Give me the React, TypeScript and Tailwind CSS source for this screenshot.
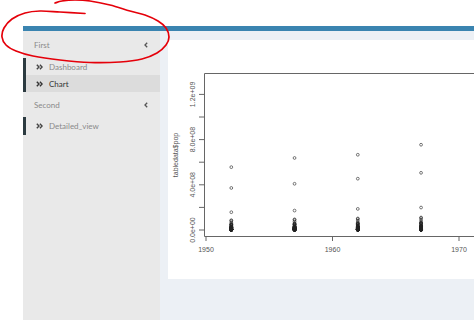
import React from "react";

type P = [number, number];

const redPts: P[] = [
  [85, 13.5], [60, 12], [40, 11], [25, 13], [12, 19], [4, 28], [2, 37], [6, 45], [16, 51],
  [33, 56], [60, 60], [90, 62.5], [120, 62], [142, 59], [157, 53], [166, 45], [169, 37],
  [166, 28], [158, 21], [145, 15], [130, 11], [110, 5], [90, 1], [75, 0], [62, 1], [55, 3],
];

function smooth(points: P[]): string {
  let d = `M${points[0][0]} ${points[0][1]}`;
  for (let i = 0; i < points.length - 1; i++) {
    const p0 = points[i - 1] || points[i];
    const p1 = points[i];
    const p2 = points[i + 1];
    const p3 = points[i + 2] || p2;
    const c1x = p1[0] + (p2[0] - p0[0]) / 6;
    const c1y = p1[1] + (p2[1] - p0[1]) / 6;
    const c2x = p2[0] - (p3[0] - p1[0]) / 6;
    const c2y = p2[1] - (p3[1] - p1[1]) / 6;
    d += ` C${c1x.toFixed(2)} ${c1y.toFixed(2)} ${c2x.toFixed(2)} ${c2y.toFixed(2)} ${p2[0]} ${p2[1]}`;
  }
  return d;
}

const years = [1952, 1957, 1962, 1967];
const top3: number[][] = [
  [556.26, 372.0, 157.55],
  [637.41, 409.0, 171.98],
  [665.77, 454.0, 186.54],
  [754.55, 506.0, 198.71],
];
const rest = [
  86.46, 82.05, 69.15, 56.6, 50.43, 47.67, 46.89, 42.46, 41.35, 33.12, 30.14, 28.55, 26.25,
  25.73, 22.44, 22.24, 22.22, 21.29, 20.95, 20.86, 20.09, 17.88, 17.27, 16.63, 14.1, 13.65,
  12.35, 10.38, 9.96, 9.5, 9.1, 8.9, 8.8, 8.7, 8.4, 8.0, 7.1, 6.9, 6.6, 6.2, 5.8, 5.4, 5.0,
  4.9, 4.6, 4.4, 4.2, 4.0, 3.8, 3.5, 3.3, 3.1, 2.9, 2.7, 2.5, 2.3, 2.1, 1.9, 1.7, 1.5, 1.3,
  1.1, 0.9, 0.7, 0.5, 0.3, 0.1,
];
const growth = [1, 1.09, 1.18, 1.28];

const xmap = (y: number) => 38 + (y - 1950) * 12.65;
const ymap = (m: number) => 190 - m * 0.113;

function DoubleChevron({ color }: { color: string }) {
  return (
    <svg width="7" height="6" viewBox="0 0 7 6" className="shrink-0">
      <path
        d="M0.8 0.8 L3 3 L0.8 5.2 M3.9 0.8 L6.1 3 L3.9 5.2"
        fill="none"
        stroke={color}
        strokeWidth="1.4"
      />
    </svg>
  );
}

function LeftChevron() {
  return (
    <svg width="4" height="6" viewBox="0 0 4 6" className="shrink-0">
      <path d="M3.2 0.8 L1 3 L3.2 5.2" fill="none" stroke="#555" strokeWidth="1.3" />
    </svg>
  );
}

function Plot() {
  const yTicks = [0, 200, 400, 600, 800, 1000, 1200];
  const yLabels: [number, string][] = [
    [0, "0.0e+00"],
    [400, "4.0e+08"],
    [800, "8.0e+08"],
    [1200, "1.2e+09"],
  ];
  const xTicks: [number, string][] = [
    [1950, "1950"],
    [1960, "1960"],
    [1970, "1970"],
  ];
  return (
    <svg width="306" height="239" viewBox="0 0 306 239" className="block">
      <g fontFamily="'Liberation Sans', Arial, sans-serif" fontSize="7" fill="#555">
        <path d="M36.5 196.5 V33.5 H320 M36.5 196.5 H320" fill="none" stroke="#666" strokeWidth="1" />
        {yTicks.map((t) => (
          <line key={t} x1="31" x2="36.5" y1={ymap(t)} y2={ymap(t)} stroke="#666" strokeWidth="1" />
        ))}
        {yLabels.map(([t, s]) => (
          <text
            key={s}
            x="0"
            y="0"
            textAnchor="middle"
            transform={`translate(26.5 ${ymap(t)}) rotate(-90)`}
          >
            {s}
          </text>
        ))}
        {xTicks.map(([t, s]) => (
          <g key={s}>
            <line x1={xmap(t)} x2={xmap(t)} y1="196.5" y2="201" stroke="#666" strokeWidth="1" />
            <text x={xmap(t)} y="211.5" textAnchor="middle">
              {s}
            </text>
          </g>
        ))}
        <text x="0" y="0" textAnchor="middle" transform="translate(9.5 115) rotate(-90)">
          tabledata$pop
        </text>
      </g>
      <g fill="none" stroke="#222" strokeWidth="0.6">
        {years.map((yr, i) => {
          const cx = xmap(yr);
          const vals = [...top3[i], ...rest.map((r) => r * growth[i])];
          return vals.map((v, j) => <circle key={`${yr}-${j}`} cx={cx} cy={ymap(v)} r="1.4" />);
        })}
      </g>
    </svg>
  );
}

export default function App() {
  return (
    <div
      className="relative w-[474px] h-[322px] bg-white overflow-hidden"
      style={{ fontFamily: "Lato, 'Open Sans', sans-serif" }}
    >
      <div className="pt-[26px] pl-[23px] h-[320px] flex flex-col">
        <div className="h-[5px] bg-[#3a84b0] shrink-0" />
        <div className="flex flex-1 min-h-0">
          <aside className="w-[137px] bg-[#e9e9e9] shrink-0 text-[8px]">
            <div className="h-[27px] flex items-center justify-between pl-[11px] pr-[12px] text-[#8a8a8a]">
              <span>First</span>
              <LeftChevron />
            </div>
            <div className="border-l-[3px] border-[#2c3b41]">
              <div className="h-[17px] flex items-center pl-[10px] gap-[6px] text-[#8a8a8a]">
                <DoubleChevron color="#444" />
                <span>Dashboard</span>
              </div>
              <div className="h-[17px] flex items-center pl-[10px] gap-[6px] bg-[#dcdcdc] text-[#333]">
                <DoubleChevron color="#333" />
                <span>Chart</span>
              </div>
            </div>
            <div className="h-[25px] flex items-center justify-between pl-[11px] pr-[12px] text-[#8a8a8a]">
              <span>Second</span>
              <LeftChevron />
            </div>
            <div className="border-l-[3px] border-[#2c3b41]">
              <div className="h-[18px] flex items-center pl-[10px] gap-[6px] text-[#8a8a8a]">
                <DoubleChevron color="#444" />
                <span>Detailed_view</span>
              </div>
            </div>
          </aside>
          <main className="flex-1 bg-[#ecf0f5] pl-[8px] pt-[9px] pb-[41px] min-w-0">
            <div className="bg-white h-full overflow-hidden">
              <Plot />
            </div>
          </main>
        </div>
      </div>
      <svg
        className="absolute left-0 top-0 pointer-events-none"
        width="474"
        height="322"
        viewBox="0 0 474 322"
      >
        <path d={smooth(redPts)} fill="none" stroke="#e5000a" strokeWidth="1.7" strokeLinecap="round" />
      </svg>
    </div>
  );
}
